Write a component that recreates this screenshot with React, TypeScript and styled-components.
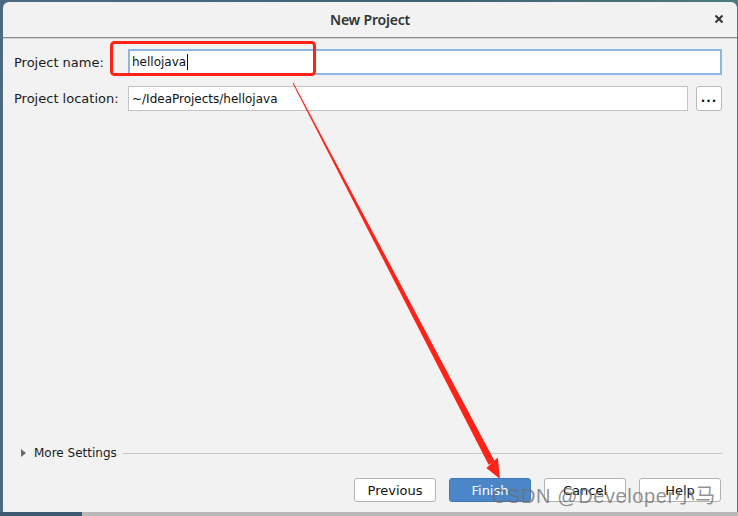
import React from "react";
import styled, { createGlobalStyle } from "styled-components";

const Global = createGlobalStyle`
  html, body { margin: 0; padding: 0; }
  body {
    width: 738px; height: 516px; overflow: hidden;
    font-family: "DejaVu Sans", "Noto Sans", sans-serif;
  }
`;

const Desktop = styled.div`
  width: 738px;
  height: 516px;
  box-sizing: border-box;
  padding: 2px 1px 0 3px;
  background:
    linear-gradient(to right, #3d586e 0, #3d586e 82px, #b9b9b9 82px) bottom / 100% 4px no-repeat,
    linear-gradient(to right, #4d6a80, #3f6272 60%, #4d7a80);
`;

const Dialog = styled.div`
  position: relative;
  width: 734px;
  height: 510px;
  background: #f2f2f2;
  border-radius: 6px 6px 0 0;
  display: flex;
  flex-direction: column;
  overflow: hidden;
`;

const TitleBar = styled.div`
  height: 35px;
  flex: none;
  display: flex;
  align-items: center;
  justify-content: center;
  position: relative;
  border-bottom: 1px solid #8f8f8f;
  box-shadow: 0 1px 0 #cfcfcf;
`;

const Title = styled.div`
  font-family: "Noto Sans", sans-serif;
  font-size: 14px;
  font-weight: 600;
  color: #2e3436;
  letter-spacing: -0.2px;
`;

const Close = styled.div`
  position: absolute;
  right: 12px;
  top: 11px;
  width: 12px;
  height: 12px;
  display: flex;
`;

const Body = styled.div`
  flex: 1;
  display: flex;
  flex-direction: column;
  padding: 11px 15px 10px 11px;
`;

const Row = styled.div<{ $mt?: number }>`
  display: flex;
  align-items: center;
  margin-top: ${(p) => p.$mt ?? 0}px;
`;

const Label = styled.div`
  width: 114px;
  flex: none;
  font-size: 13px;
  color: #1a1a1a;
`;

const Field = styled.div<{ $focused?: boolean }>`
  flex: 1;
  height: ${(p) => (p.$focused ? 26 : 25)}px;
  box-sizing: border-box;
  background: #fff;
  border: ${(p) => (p.$focused ? "2px solid #8db5e6" : "1px solid #c4c4c4")};
  display: flex;
  align-items: center;
  padding-left: ${(p) => (p.$focused ? 2 : 3)}px;
  font-size: 12px;
  color: #111;
`;

const Caret = styled.span`
  display: inline-block;
  width: 1px;
  height: 16px;
  background: #111;
  margin-left: 1px;
`;

const BrowseButton = styled.div`
  width: 26px;
  height: 25px;
  box-sizing: border-box;
  margin-left: 8px;
  border: 1px solid #b9b9b9;
  border-radius: 3px;
  background: #fff;
  display: flex;
  align-items: flex-end;
  justify-content: center;
  padding-bottom: 5px;
  font-size: 12px;
  font-weight: bold;
  letter-spacing: 1px;
  color: #111;
`;

const Spacer = styled.div`
  flex: 1;
`;

const MoreRow = styled.div`
  display: flex;
  align-items: center;
  padding-left: 7px;
  height: 14px;
`;

const Triangle = styled.span`
  width: 0;
  height: 0;
  border-top: 4px solid transparent;
  border-bottom: 4px solid transparent;
  border-left: 5px solid #6a6a6a;
  margin-right: 8px;
`;

const MoreText = styled.span`
  font-size: 12px;
  color: #1a1a1a;
`;

const Rule = styled.div`
  flex: 1;
  height: 1px;
  background: #c6c6c6;
  margin-left: 6px;
`;

const Buttons = styled.div`
  display: flex;
  justify-content: flex-end;
  gap: 13px;
  margin-top: 18px;
  padding-right: 1px;
`;

const Button = styled.div<{ $primary?: boolean }>`
  width: 82px;
  height: 24px;
  box-sizing: border-box;
  border-radius: 3px;
  border: 1px solid ${(p) => (p.$primary ? "#3f78b8" : "#b4b4b4")};
  background: ${(p) => (p.$primary ? "#4a86c8" : "#fff")};
  color: ${(p) => (p.$primary ? "#fff" : "#111")};
  display: flex;
  align-items: center;
  justify-content: center;
  font-size: 13px;
`;

const Overlay = styled.svg`
  position: absolute;
  left: -3px;
  top: -2px;
  pointer-events: none;
`;

const Watermark = styled.div`
  position: absolute;
  left: 489px;
  top: 478px;
  font-family: "Liberation Sans", "Noto Sans CJK SC", sans-serif;
  font-size: 20px;
  letter-spacing: 0.6px;
  color: rgba(110, 110, 110, 0.75);
  white-space: nowrap;
  pointer-events: none;
`;

function arrowShapes() {
  const sx = 293, sy = 83;
  const tx = 500, ty = 479;
  const dx = tx - sx, dy = ty - sy;
  const len = Math.hypot(dx, dy);
  const ux = dx / len, uy = dy / len;
  const nx = uy, ny = -ux;
  const bx = tx - ux * 18, by = ty - uy * 18;
  const p = (x: number, y: number) => `${x.toFixed(1)},${y.toFixed(1)}`;
  const shaft = [
    p(sx + nx * 0.5, sy + ny * 0.5),
    p(bx + nx * 3.5, by + ny * 3.5),
    p(bx - nx * 3.5, by - ny * 3.5),
    p(sx - nx * 0.5, sy - ny * 0.5),
  ].join(" ");
  const head = [
    p(tx, ty),
    p(bx + nx * 8 - ux * 2, by + ny * 8 - uy * 2),
    p(bx - nx * 7 + ux * 2, by - ny * 7 + uy * 2),
  ].join(" ");
  return { shaft, head };
}

export default function App() {
  const { shaft, head } = arrowShapes();
  return (
    <>
      <Global />
      <Desktop>
        <Dialog>
          <TitleBar>
            <Title>New Project</Title>
            <Close>
              <svg width="12" height="12" viewBox="0 0 12 12">
                <path d="M2.5 2.5 L9.5 9.5 M9.5 2.5 L2.5 9.5" stroke="#2e3436" strokeWidth="2" />
              </svg>
            </Close>
          </TitleBar>
          <Body>
            <Row>
              <Label>Project name:</Label>
              <Field $focused>
                hellojava<Caret />
              </Field>
            </Row>
            <Row $mt={11}>
              <Label>Project location:</Label>
              <Field>~/IdeaProjects/hellojava</Field>
              <BrowseButton>...</BrowseButton>
            </Row>
            <Spacer />
            <MoreRow>
              <Triangle />
              <MoreText>More Settings</MoreText>
              <Rule />
            </MoreRow>
            <Buttons>
              <Button>Previous</Button>
              <Button $primary>Finish</Button>
              <Button>Cancel</Button>
              <Button>Help</Button>
            </Buttons>
          </Body>
          <Overlay width="738" height="516" viewBox="0 0 738 516">
            <rect x="111.5" y="42.5" width="203" height="32" rx="3" fill="none" stroke="#ff2216" strokeWidth="3" />
            <polygon points={shaft} fill="#ff2216" />
            <polygon points={head} fill="#ff2216" />
          </Overlay>
          <Watermark>CSDN @Developer小马</Watermark>
        </Dialog>
      </Desktop>
    </>
  );
}
